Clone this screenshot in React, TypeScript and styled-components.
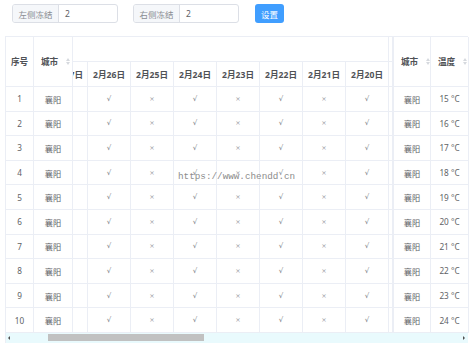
import React from 'react';
import styled, { createGlobalStyle } from 'styled-components';

const GlobalStyle = createGlobalStyle`
  body {
    margin: 0;
    background: #fff;
    font-family: "Noto Sans", "Noto Sans CJK SC", sans-serif;
  }
`;

const Page = styled.div`
  position: relative;
  width: 474px;
  height: 345px;
  overflow: hidden;
`;

const Toolbar = styled.div`
  display: flex;
  align-items: center;
  height: 19px;
  padding: 4px 0 0 12px;
`;

const InputGroup = styled.div`
  display: flex;
  width: 106px;
  height: 19px;
  margin-right: 15px;
  border: 1px solid #dcdfe6;
  border-radius: 3px;
  box-sizing: border-box;
  overflow: hidden;
`;

const Prepend = styled.div`
  width: 45px;
  background: #f5f7fa;
  border-right: 1px solid #dcdfe6;
  color: #8a8d93;
  font-size: 8.5px;
  display: flex;
  align-items: center;
  justify-content: center;
`;

const InputValue = styled.div`
  flex: 1;
  padding-left: 6px;
  font-size: 8.5px;
  color: #606266;
  display: flex;
  align-items: center;
`;

const Button = styled.div`
  width: 29px;
  height: 19px;
  margin-left: 1px;
  background: #409eff;
  border-radius: 3px;
  color: #fff;
  font-size: 8.5px;
  display: flex;
  align-items: center;
  justify-content: center;
`;

const Table = styled.div`
  margin: 13px 0 0 5px;
  width: 463px;
  border-top: 1px solid #ebeef5;
  border-left: 1px solid #ebeef5;
  box-sizing: border-box;
`;

const Body = styled.div`
  display: flex;
`;

const Section = styled.div<{ w: number; edge?: boolean }>`
  width: ${({ w }) => w}px;
  flex: none;
  overflow: hidden;
  border-left: ${({ edge }) => (edge ? '1px solid #ebeef5' : 'none')};
  box-sizing: border-box;
`;

const Inner = styled.div<{ shift: number }>`
  margin-left: ${({ shift }) => shift}px;
`;

const Row = styled.div<{ h: number }>`
  display: flex;
  height: ${({ h }) => h}px;
`;

const Stack = styled.div`
  display: flex;
  flex-direction: column;
`;

const Cell = styled.div<{ w: number; head?: boolean; left?: boolean }>`
  width: ${({ w }) => w}px;
  flex: none;
  box-sizing: border-box;
  border-right: 1px solid #ebeef5;
  border-bottom: 1px solid #ebeef5;
  display: flex;
  align-items: center;
  justify-content: ${({ left }) => (left ? 'flex-start' : 'center')};
  padding-left: ${({ left }) => (left ? '7px' : '0')};
  font-size: ${({ head }) => (head ? '8.6px' : '8.2px')};
  font-weight: ${({ head }) => (head ? 700 : 400)};
  color: ${({ head }) => (head ? '#4f5256' : '#606266')};
  white-space: nowrap;
`;

const Mark = styled.span<{ yes: boolean }>`
  font-family: "DejaVu Sans", sans-serif;
  color: ${({ yes }) => (yes ? '#7d8086' : '#9a9da2')};
  font-size: ${({ yes }) => (yes ? '7px' : '6.5px')};
`;

const CaretWrap = styled.span`
  display: inline-flex;
  flex-direction: column;
  gap: 1px;
  margin-left: 8px;
`;

const Caret = styled.span<{ up?: boolean }>`
  width: 0;
  height: 0;
  border-left: 2px solid transparent;
  border-right: 2px solid transparent;
  ${({ up }) =>
    up ? 'border-bottom: 3px solid #d6d9de;' : 'border-top: 3px solid #d6d9de;'}
`;

const Scrollbar = styled.div`
  position: relative;
  height: 10px;
  background: #e9fafd;
`;

const Thumb = styled.div`
  position: absolute;
  left: 42px;
  top: 1px;
  width: 156px;
  height: 7px;
  background: #c1c1c1;
`;

const Arrow = styled.span<{ side: 'left' | 'right' }>`
  position: absolute;
  top: 3px;
  ${({ side }) => (side === 'left' ? 'left: 2px;' : 'right: 3px;')}
  width: 0;
  height: 0;
  border-top: 2px solid transparent;
  border-bottom: 2px solid transparent;
  ${({ side }) =>
    side === 'left'
      ? 'border-right: 2px solid #505050;'
      : 'border-left: 2px solid #505050;'}
`;

const Watermark = styled.div`
  position: absolute;
  left: 178px;
  top: 171px;
  font-family: "Liberation Mono", monospace;
  font-size: 9.3px;
  color: #8c8c8c;
  pointer-events: none;
`;

const ROW_H = 24.6;
const rows = Array.from({ length: 10 }, (_, i) => i + 1);
const dates = [27, 26, 25, 24, 23, 22, 21, 20];
const COL = 43;
// the first, partly scrolled-away column
const FIRST = 41;
// sliver of the next column that peeks out under the right fixed block
const SLIVER = 4;

const Sort = () => (
  <CaretWrap>
    <Caret up />
    <Caret />
  </CaretWrap>
);

const colWidth = (i: number) => (i === 0 ? FIRST : COL);

export default function App() {
  return (
    <Page>
      <GlobalStyle />
      <Toolbar>
        <InputGroup>
          <Prepend>左侧冻结</Prepend>
          <InputValue>2</InputValue>
        </InputGroup>
        <InputGroup>
          <Prepend>右侧冻结</Prepend>
          <InputValue>2</InputValue>
        </InputGroup>
        <Button>设置</Button>
      </Toolbar>

      <Table>
        <Body>
          {/* left fixed */}
          <Section w={67}>
            <Row h={50}>
              <Cell w={28} head>序号</Cell>
              <Cell w={39} head left>
                城市
                <Sort />
              </Cell>
            </Row>
            {rows.map((n) => (
              <Row h={ROW_H} key={n}>
                <Cell w={28}>{n}</Cell>
                <Cell w={39}>襄阳</Cell>
              </Row>
            ))}
          </Section>

          {/* scrolled middle */}
          <Section w={320}>
            <Inner shift={-(FIRST - 15)}>
              <Stack>
                <Row h={25}>
                  <Cell w={FIRST + COL * 7} head />
                  <Cell w={SLIVER} head />
                </Row>
                <Row h={25}>
                  {dates.map((d, i) => (
                    <Cell w={colWidth(i)} head key={d}>
                      2月{d}日
                    </Cell>
                  ))}
                  <Cell w={SLIVER} head />
                </Row>
              </Stack>
              {rows.map((n) => (
                <Row h={ROW_H} key={n}>
                  {dates.map((d, i) => (
                    <Cell w={colWidth(i)} key={d}>
                      <Mark yes={d % 2 === 0}>{d % 2 === 0 ? '√' : '×'}</Mark>
                    </Cell>
                  ))}
                  <Cell w={SLIVER} />
                </Row>
              ))}
            </Inner>
          </Section>

          {/* right fixed */}
          <Section w={76} edge>
            <Row h={50}>
              <Cell w={37} head left>
                城市
                <Sort />
              </Cell>
              <Cell w={38} head left>
                温度
                <Sort />
              </Cell>
            </Row>
            {rows.map((n) => (
              <Row h={ROW_H} key={n}>
                <Cell w={37}>襄阳</Cell>
                <Cell w={38}>{14 + n} °C</Cell>
              </Row>
            ))}
          </Section>
        </Body>
        <Scrollbar>
          <Arrow side="left" />
          <Thumb />
          <Arrow side="right" />
        </Scrollbar>
      </Table>

      <Watermark>https://www.chendd.cn</Watermark>
    </Page>
  );
}
